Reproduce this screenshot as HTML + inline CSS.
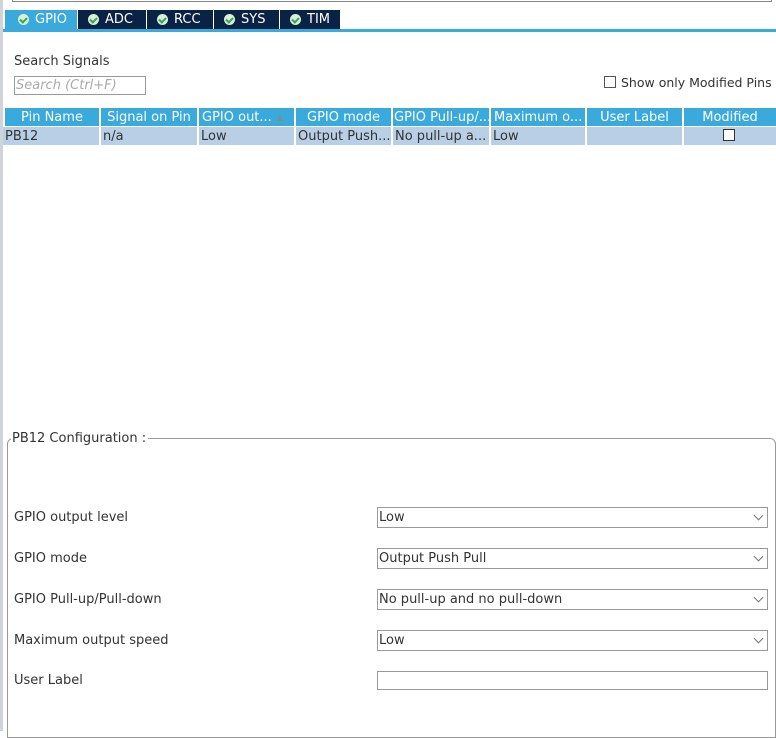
<!DOCTYPE html>
<html><head><meta charset="utf-8"><style>
*{box-sizing:border-box;margin:0;padding:0;white-space:nowrap}
body{width:776px;height:731px;background:#fff;font-family:"DejaVu Sans","Liberation Sans",sans-serif;font-size:13px;line-height:16px;color:#333;position:relative;overflow:hidden}
.abs{position:absolute}
.leftbar{left:0;top:0;width:3px;height:731px;background:#d0d4da}
.topbox{left:12px;top:-2px;width:760px;height:4px;border:1px solid #888;border-top:none}
.tab{top:10px;height:19px;color:#fff;font-size:13px;line-height:19px;padding-left:13px}
.tab .ic{position:absolute;left:13px;top:4px;width:11px;height:11px;border-radius:50%;background:#d8f0d8}
.tab .ic:after{content:"";position:absolute;left:3px;top:2px;width:3px;height:5px;border:solid #3aa356;border-width:0 2px 2px 0;transform:rotate(45deg)}
.tab span{position:absolute;left:30px}
.bline{left:3px;top:29px;width:773px;height:3px;background:#3aa9dc}
.hd{top:108px;height:18px;background:#3aa9dc;color:#fff;font-size:13px;line-height:19px;text-align:center;overflow:hidden}
.cl{top:127px;height:18px;background:#b8cfe6;font-size:13px;line-height:19px;padding-left:2px;overflow:hidden}
.lab{left:14px;font-size:13px}
.sel{left:377px;width:391px;height:21px;border:1px solid #999;font-size:13px;line-height:20px;padding-left:1px}
.sel i{position:absolute;right:5px;top:4px;width:7px;height:7px;border:solid #777;border-width:0 1px 1px 0;transform:rotate(45deg)}
</style></head><body>
<div class="abs leftbar"></div>
<div class="abs topbox"></div>
<div class="abs tab" style="left:5px;width:72px;background:#3aa9dc"><div class="ic"></div><span>GPIO</span></div>
<div class="abs tab" style="left:78px;width:68px;background:#0a2244"><div class="ic" style="left:10px"></div><span style="left:27px">ADC</span></div>
<div class="abs tab" style="left:147px;width:66px;background:#0a2244"><div class="ic" style="left:10px"></div><span style="left:27px">RCC</span></div>
<div class="abs tab" style="left:214px;width:65px;background:#0a2244"><div class="ic" style="left:10px"></div><span style="left:27px">SYS</span></div>
<div class="abs tab" style="left:280px;width:60px;background:#0a2244"><div class="ic" style="left:10px"></div><span style="left:27px">TIM</span></div>
<div class="abs bline"></div>

<div class="abs" style="left:14px;top:54px">Search Signals</div>
<div class="abs" style="left:14px;top:76px;width:132px;height:19px;border:1px solid #999;font-style:italic;color:#aaa;line-height:17px;padding-left:1px">Search (Ctrl+F)</div>
<div class="abs" style="left:604px;top:76px;width:12px;height:12px;border:1px solid #555"></div>
<div class="abs" style="left:621px;top:75px;font-size:12.5px">Show only Modified Pins</div>

<div class="abs hd" style="left:5px;width:94px">Pin Name</div>
<div class="abs hd" style="left:101px;width:96px">Signal on Pin</div>
<div class="abs hd" style="left:199px;width:95px;text-align:left;padding-left:3px">GPIO out...<span style="position:absolute;left:78px;top:0;font-size:8px;color:#888">▲</span></div>
<div class="abs hd" style="left:296px;width:95px">GPIO mode</div>
<div class="abs hd" style="left:393px;width:96px;text-align:left;padding-left:1px">GPIO Pull-up/...</div>
<div class="abs hd" style="left:491px;width:94px;text-align:left;padding-left:3px">Maximum o...</div>
<div class="abs hd" style="left:587px;width:95px">User Label</div>
<div class="abs hd" style="left:684px;width:92px">Modified</div>

<div class="abs cl" style="left:3px;width:96px">PB12</div>
<div class="abs cl" style="left:101px;width:96px">n/a</div>
<div class="abs cl" style="left:199px;width:95px">Low</div>
<div class="abs cl" style="left:296px;width:95px">Output Push...</div>
<div class="abs cl" style="left:393px;width:96px">No pull-up a...</div>
<div class="abs cl" style="left:491px;width:94px">Low</div>
<div class="abs cl" style="left:587px;width:95px"></div>
<div class="abs cl" style="left:684px;width:92px"></div>
<div class="abs" style="left:723px;top:129px;width:12px;height:12px;border:1px solid #333;background:#fff"></div>

<div class="abs" style="left:7px;top:438px;width:769px;height:300px;border:1px solid #999;border-radius:6px 6px 0 0"></div>
<div class="abs" style="left:11px;top:431px;background:#fff;padding:0 2px 0 1px">PB12 Configuration :</div>

<div class="abs lab" style="top:510px">GPIO output level</div>
<div class="abs sel" style="top:507px">Low<i></i></div>
<div class="abs lab" style="top:551px">GPIO mode</div>
<div class="abs sel" style="top:548px">Output Push Pull<i></i></div>
<div class="abs lab" style="top:592px">GPIO Pull-up/Pull-down</div>
<div class="abs sel" style="top:589px">No pull-up and no pull-down<i></i></div>
<div class="abs lab" style="top:633px">Maximum output speed</div>
<div class="abs sel" style="top:630px">Low<i></i></div>
<div class="abs lab" style="top:673px">User Label</div>
<div class="abs sel" style="top:671px;height:19px"></div>
</body></html>
